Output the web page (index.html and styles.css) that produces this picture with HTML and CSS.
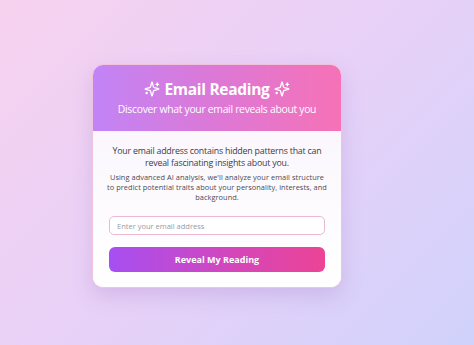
FILE: index.html
```html
<!DOCTYPE html>
<html lang="en">
<head>
    <meta charset="UTF-8">
    <title>Email Reading</title>
    <link rel="stylesheet" href="styles.css">
</head>
<body>
    <div id="wrap">
        <div class="card">
            <div class="card-head">
                <h1 class="title">
                    <svg class="spark" viewBox="0 0 24 24"><path d="M9.9 15.5A2 2 0 0 0 8.5 14.1l-6.1-1.6a.5.5 0 0 1 0-1L8.5 9.9A2 2 0 0 0 9.9 8.5l1.6-6.1a.5.5 0 0 1 1 0l1.6 6.1a2 2 0 0 0 1.4 1.4l6.1 1.6a.5.5 0 0 1 0 1l-6.1 1.6a2 2 0 0 0-1.4 1.4l-1.6 6.1a.5.5 0 0 1-1 0z"/><path d="M20 3v4M22 5h-4M4 17v2M5 18H3"/></svg>
                    Email Reading
                    <svg class="spark" viewBox="0 0 24 24"><path d="M9.9 15.5A2 2 0 0 0 8.5 14.1l-6.1-1.6a.5.5 0 0 1 0-1L8.5 9.9A2 2 0 0 0 9.9 8.5l1.6-6.1a.5.5 0 0 1 1 0l1.6 6.1a2 2 0 0 0 1.4 1.4l6.1 1.6a.5.5 0 0 1 0 1l-6.1 1.6a2 2 0 0 0-1.4 1.4l-1.6 6.1a.5.5 0 0 1-1 0z"/><path d="M20 3v4M22 5h-4M4 17v2M5 18H3"/></svg>
                </h1>
                <p class="sub">Discover what your email reveals about you</p>
            </div>
            <div class="card-body">
                <p class="lead">Your email address contains hidden patterns that can reveal fascinating insights about you.</p>
                <p class="note">Using advanced AI analysis, we'll analyze your email structure<br>to predict potential traits about your personality, interests, and<br>background.</p>
                <input class="email" type="email" placeholder="Enter your email address">
                <button class="reveal">Reveal My Reading</button>
            </div>
        </div>
    </div>
</body>
</html>
```

FILE: styles.css
```css
*{
    margin: 0;
    padding: 0;
    box-sizing: border-box;
}
html,body{
    height: 100%;
}
body{
    font-family: "Open Sans", "Liberation Sans", sans-serif;
    background: linear-gradient(135deg, #f7d2ef 0%, #e8d1f8 50%, #d0d2fb 100%);
}
#wrap{
    height: 100%;
    padding: 64px 0 0 92px;
}
.card{
    width: 250px;
    border-radius: 11px;
    border: 1px solid #f0c3dc;
    background: #fff;
    overflow: hidden;
    box-shadow: 0 8px 20px rgba(150, 110, 190, .25);
}
.card-head{
    height: 66px;
    padding-top: 13px;
    text-align: center;
    color: #fff;
    background: linear-gradient(90deg, #c184f6 0%, #dd78d6 50%, #f672b6 100%);
}
.title{
    display: flex;
    justify-content: center;
    align-items: center;
    gap: 4px;
    font-size: 15.5px;
    font-weight: 700;
    line-height: 22px;
    letter-spacing: -0.3px;
}
.spark{
    width: 16px;
    height: 16px;
    fill: none;
    stroke: #fff;
    stroke-width: 2;
    stroke-linejoin: round;
    stroke-linecap: round;
}
.sub{
    margin-top: 1px;
    font-size: 10.4px;
    line-height: 16px;
    letter-spacing: -0.3px;
}
.card-body{
    padding: 14px 15px 15px;
    text-align: center;
    background: linear-gradient(180deg, #fbf7fd, #fff);
}
.lead{
    padding: 0 2px;
    font-size: 8.8px;
    line-height: 12px;
    letter-spacing: -0.2px;
    color: #3c3c46;
}
.note{
    margin: 3px -6px 0;
    font-size: 7.4px;
    line-height: 10px;
    letter-spacing: 0.05px;
    color: #4a4a54;
}
.email{
    display: block;
    width: calc(100% - 2px);
    height: 19px;
    margin: 14px auto 0;
    padding: 0 7px;
    border: 1px solid #ecb8d2;
    border-radius: 5px;
    font-family: inherit;
    font-size: 7.5px;
    background: #fff;
    outline: none;
}
.email::placeholder{
    color: #9a9aa4;
}
.reveal{
    display: block;
    width: calc(100% - 2px);
    height: 25px;
    margin: 12px auto 0;
    border: 0;
    border-radius: 6px;
    font-family: inherit;
    font-size: 9px;
    font-weight: 700;
    color: #fff;
    background: linear-gradient(90deg, #a64ff2 0%, #d646b8 60%, #ec4496 100%);
}
```
